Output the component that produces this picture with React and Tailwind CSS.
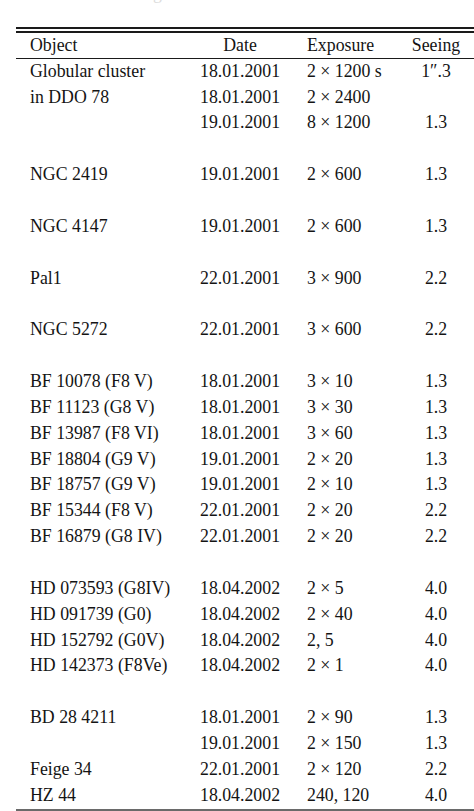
const rows = [
  ['Globular cluster', '18.01.2001', '2 × 1200 s', '1″.3'],
  ['in DDO 78', '18.01.2001', '2 × 2400', ''],
  ['', '19.01.2001', '8 × 1200', '1.3'],
  null,
  ['NGC 2419', '19.01.2001', '2 × 600', '1.3'],
  null,
  ['NGC 4147', '19.01.2001', '2 × 600', '1.3'],
  null,
  ['Pal1', '22.01.2001', '3 × 900', '2.2'],
  null,
  ['NGC 5272', '22.01.2001', '3 × 600', '2.2'],
  null,
  ['BF 10078 (F8 V)', '18.01.2001', '3 × 10', '1.3'],
  ['BF 11123 (G8 V)', '18.01.2001', '3 × 30', '1.3'],
  ['BF 13987 (F8 VI)', '18.01.2001', '3 × 60', '1.3'],
  ['BF 18804 (G9 V)', '19.01.2001', '2 × 20', '1.3'],
  ['BF 18757 (G9 V)', '19.01.2001', '2 × 10', '1.3'],
  ['BF 15344 (F8 V)', '22.01.2001', '2 × 20', '2.2'],
  ['BF 16879 (G8 IV)', '22.01.2001', '2 × 20', '2.2'],
  null,
  ['HD 073593 (G8IV)', '18.04.2002', '2 × 5', '4.0'],
  ['HD 091739 (G0)', '18.04.2002', '2 × 40', '4.0'],
  ['HD 152792 (G0V)', '18.04.2002', '2, 5', '4.0'],
  ['HD 142373 (F8Ve)', '18.04.2002', '2 × 1', '4.0'],
  null,
  ['BD 28 4211', '18.01.2001', '2 × 90', '1.3'],
  ['', '19.01.2001', '2 × 150', '1.3'],
  ['Feige 34', '22.01.2001', '2 × 120', '2.2'],
  ['HZ 44', '18.04.2002', '240, 120', '4.0'],
];

function Row({ cells, head }) {
  return (
    <div className={`grid grid-cols-[184px_80px_131px_50px] whitespace-nowrap ${head ? 'h-[25px] leading-[25px]' : 'h-[25.86px] leading-[25.86px]'}`}>
      <div className="pl-[14px]">{cells[0]}</div>
      <div className="text-center">{cells[1]}</div>
      <div className="pl-[27px]">{cells[2]}</div>
      <div className="text-center">{cells[3]}</div>
    </div>
  );
}

export default function App() {
  return (
    <div className="w-[474px] h-[811px] overflow-hidden bg-white text-[#141414] text-[17.8px] font-['Liberation_Serif','Times_New_Roman',serif]">
      {/* caption, only its lower edge is left in the crop */}
      <div className="h-[6px] overflow-hidden">
        <div className="-mt-[17px] -ml-[72px] leading-[20px] text-[#dcdcdc] whitespace-nowrap">Table 1. Journal of the observing</div>
      </div>
      <div className="ml-[16px] mt-[21px]">
        <div className="h-[1.5px] bg-[#1a1a1a]" />
        <div className="h-[2.5px]" />
        <div className="h-[1.5px] bg-[#1a1a1a]" />
        <Row head cells={['Object', 'Date', 'Exposure', 'Seeing']} />
        <div className="h-[1.2px] bg-[#1a1a1a]" />
        {rows.map((r, i) =>
          r ? <Row key={i} cells={r} /> : <div key={i} className="h-[25.86px]" />
        )}
        <div className="h-[2px] bg-[#6a6a6a]" />
      </div>
    </div>
  );
}
